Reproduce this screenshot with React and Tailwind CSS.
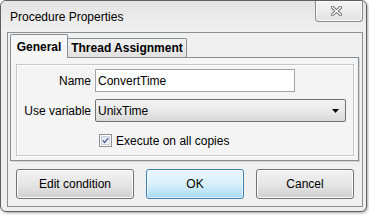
import React from 'react';

const font = { fontFamily: '"Liberation Sans", Arial, sans-serif' };

const CloseGlyph = () => (
  <svg width="11" height="10" viewBox="0 0 11 10">
    <path d="M1.5 1.5 L9.5 8.5 M9.5 1.5 L1.5 8.5" stroke="#6f6f6f" strokeWidth="3.2" strokeLinecap="square" fill="none" />
    <path d="M1.5 1.5 L9.5 8.5 M9.5 1.5 L1.5 8.5" stroke="#ffffff" strokeWidth="1.3" strokeLinecap="square" fill="none" />
  </svg>
);

const CheckBox = () => (
  <div className="w-[13px] h-[13px] border border-[#8e8f8f] bg-white flex items-center justify-center">
    <div className="w-[9px] h-[9px] border border-[#c9d2dc] bg-gradient-to-br from-[#dfe5ec] to-[#f8f9fb] flex items-center justify-center">
      <svg width="9" height="9" viewBox="0 0 9 9">
        <path d="M1 4.5 L3.5 7 L8 1.5" stroke="#4a5f97" strokeWidth="1.7" fill="none" />
      </svg>
    </div>
  </div>
);

const Button = ({ children, primary, w }) => (
  <button
    className={`${w} h-[30px] rounded-[3px] border text-[12px] text-black flex items-center justify-center ${
      primary
        ? 'border-[#3c7fb1] bg-gradient-to-b from-[#eaf6fd] via-[#d9f0fc] to-[#a7d9f5] shadow-[inset_0_0_0_1px_#ffffffa0]'
        : 'border-[#707070] bg-gradient-to-b from-[#f2f2f2] via-[#e6e6e6] to-[#cfcfcf] shadow-[inset_0_0_0_1px_#fcfcfc]'
    }`}
    style={font}
  >
    {children}
  </button>
);

export default function App() {
  return (
    <div className="w-[369px] h-[216px] bg-white" style={font}>
      <div className="w-[367px] h-[212px] rounded-[6px] border border-[#5f5f5f] bg-[#efefef] shadow-[1px_1px_3px_rgba(0,0,0,0.35)] flex flex-col overflow-hidden">
        {/* title bar */}
        <div className="h-[31px] flex items-start justify-between bg-gradient-to-b from-[#e4e4e4] to-[#f0f0f0]">
          <div className="pl-[9px] pt-[9px] text-[12px] leading-[14px] text-black">Procedure Properties</div>
          <div className="mr-[3px] w-[48px] h-[21px] rounded-b-[4px] border border-t-0 border-[#8a8a8a] bg-gradient-to-b from-[#f4f4f4] to-[#e2e2e2] shadow-[inset_0_0_0_1px_#fafafa] flex items-center justify-center pr-[6px]">
            <CloseGlyph />
          </div>
        </div>

        {/* client frame */}
        <div className="flex-1 ml-[6px] mr-[3px] mb-[4px] border border-[#8e8f8f] bg-[#f0f0f0] flex flex-col">
          <div className="pt-[1px] pl-[2px] pr-[3px]">
            {/* tabs */}
            <div className="flex items-end">
              <div className="relative z-10 -mb-px w-[58px] h-[24px] border border-b-0 border-[#898c95] bg-[#f6f6f6] rounded-t-[2px] flex items-center justify-center text-[12px] font-bold text-black">
                General
              </div>
              <div className="w-[119px] h-[19px] border-t border-r border-[#898c95] bg-gradient-to-b from-[#f2f2f2] to-[#e1e1e1] rounded-tr-[2px] flex items-center justify-center text-[12px] font-bold text-black">
                Thread Assignment
              </div>
            </div>

            {/* tab panel */}
            <div className="h-[104px] border border-[#898c95] bg-[#f4f4f4] shadow-[1px_1px_0_#d4d4d4] pt-[6px] pl-[5px] pr-[4px] pb-[4px] flex flex-col">
              <div className="flex-1 border border-[#c7c7c7] shadow-[inset_1px_1px_0_#ffffff,1px_1px_0_#ffffff] flex flex-col pt-[4px] text-[12px] text-black">
                <div className="flex items-center gap-[4px]">
                  <div className="w-[74px] text-right">Name</div>
                  <div className="w-[200px] h-[23px] border border-[#a3a3a3] bg-white pl-[2px] flex items-center">ConvertTime</div>
                </div>
                <div className="flex items-center gap-[4px] mt-[7px]">
                  <div className="w-[74px] text-right">Use variable</div>
                  <div className="w-[251px] h-[23px] rounded-[2px] border border-[#707070] bg-gradient-to-b from-[#f3f3f3] via-[#e9e9e9] to-[#d9d9d9] pl-[2px] pr-[6px] flex items-center justify-between">
                    <span>UnixTime</span>
                    <svg width="7" height="4" viewBox="0 0 7 4">
                      <path d="M0 0 H7 L3.5 4 Z" fill="#000" />
                    </svg>
                  </div>
                </div>
                <div className="flex items-center gap-[4px] mt-[12px] pl-[82px] h-[13px]">
                  <CheckBox />
                  <span>Execute on all copies</span>
                </div>
              </div>
            </div>
          </div>

          {/* buttons */}
          <div className="mt-[8px] px-[8px] flex gap-[12px]">
            <Button w="w-[118px]">Edit condition</Button>
            <Button w="w-[98px]" primary>OK</Button>
            <Button w="w-[98px]">Cancel</Button>
          </div>
        </div>
      </div>
    </div>
  );
}
